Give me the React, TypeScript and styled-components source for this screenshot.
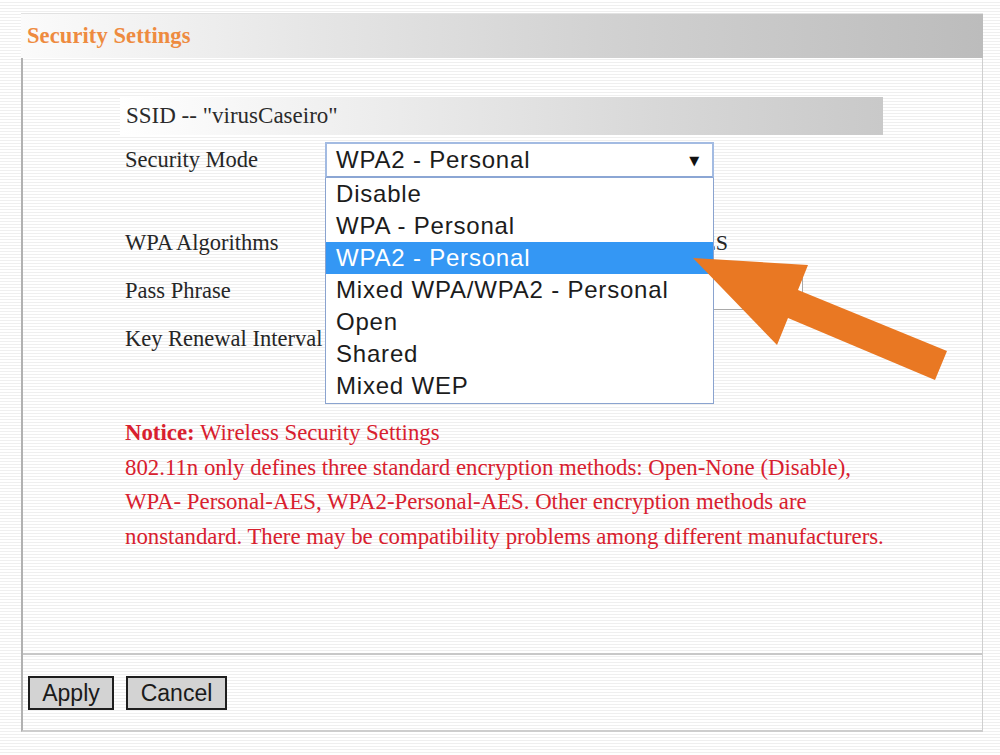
import React from "react";
import styled, { createGlobalStyle } from "styled-components";

const Global = createGlobalStyle`
  html, body { margin: 0; padding: 0; }
  body {
    width: 1000px;
    height: 755px;
    overflow: hidden;
    background: repeating-linear-gradient(to bottom, #ffffff 0px, #ffffff 2px, #efefef 2px, #efefef 3px);
    font-family: "Liberation Serif", "Times New Roman", serif;
  }
`;

const Page = styled.div`
  position: relative;
  width: 1000px;
  height: 755px;
  box-sizing: border-box;
  padding: 13px 0 0 21px;
`;

const Frame = styled.div`
  width: 962px;
  display: flex;
  flex-direction: column;
`;

const Header = styled.div`
  height: 45px;
  box-sizing: border-box;
  border-top: 1px solid #e2e2e2;
  padding-left: 6px;
  display: flex;
  align-items: center;
  background: linear-gradient(to right, #fbfbfb 0%, #e6e6e6 30%, #d2d2d2 60%, #bcbcbc 100%);
`;

const Title = styled.h1`
  margin: 0;
  font-family: "Liberation Serif", "Times New Roman", serif;
  font-size: 22.5px;
  font-weight: bold;
  color: #ee8b3f;
  letter-spacing: 0.1px;
`;

const Panel = styled.div`
  border-left: 2px solid #b1b1b1;
  border-right: 1px solid #cfcfcf;
  border-bottom: 2px solid #cdcdcd;
  display: flex;
  flex-direction: column;
`;

const Main = styled.div`
  height: 595px;
  box-sizing: border-box;
  padding: 39px 0 0 97px;
  display: flex;
  flex-direction: column;
`;

const SsidBar = styled.div`
  width: 763px;
  height: 38px;
  box-sizing: border-box;
  padding-left: 6px;
  display: flex;
  align-items: center;
  font-size: 23px;
  color: #2b2b2b;
  background: linear-gradient(to right, #ffffff 0%, #ececec 35%, #d8d8d8 70%, #c9c9c9 100%);
`;

const Row = styled.div<{ $h: number; $mt?: number }>`
  display: grid;
  grid-template-columns: 205px 1fr;
  align-items: center;
  height: ${(p) => p.$h}px;
  margin-top: ${(p) => p.$mt ?? 0}px;
  width: 763px;
`;

const Label = styled.div`
  padding-left: 5px;
  font-size: 22.5px;
  color: #262626;
  white-space: nowrap;
`;

const SelectWrap = styled.div`
  position: relative;
  width: 389px;
  height: 36px;
  z-index: 5;
`;

const SelectBox = styled.div`
  height: 36px;
  box-sizing: border-box;
  border: 2px solid #a3bbe2;
  border-bottom-color: #8ba6d4;
  background: #fff;
  display: flex;
  align-items: center;
  justify-content: space-between;
  padding: 0 12px 0 9px;
  font-family: "Liberation Sans", Arial, sans-serif;
  font-size: 24px;
  letter-spacing: 0.8px;
  color: #1c1c1c;
`;

const Caret = styled.span`
  font-size: 13px;
  color: #111;
  font-family: "DejaVu Sans", sans-serif;
`;

const OptionList = styled.ul`
  position: absolute;
  top: 36px;
  left: 0;
  width: 389px;
  box-sizing: border-box;
  margin: 0;
  padding: 0 0 1px;
  list-style: none;
  background: #fff;
  border: 1px solid #8aa3cf;
  border-top: none;
`;

const Option = styled.li<{ $active?: boolean }>`
  height: 32px;
  display: flex;
  align-items: center;
  padding-left: 10px;
  font-family: "Liberation Sans", Arial, sans-serif;
  font-size: 24px;
  letter-spacing: 0.8px;
  color: ${(p) => (p.$active ? "#ffffff" : "#1c1c1c")};
  background: ${(p) => (p.$active ? "#3497f4" : "transparent")};
`;

const RadioGroup = styled.div`
  width: 403px;
  display: flex;
  justify-content: flex-end;
  align-items: center;
  gap: 6px;
  font-size: 22px;
  color: #262626;
`;

const TextInput = styled.div<{ $w: number }>`
  width: ${(p) => p.$w}px;
  height: 37px;
  box-sizing: border-box;
  border: 1px solid #a9a9a9;
  border-top-color: #8d8d8d;
  background: #fff;
`;

const Notice = styled.div`
  margin-top: 53px;
  padding-left: 5px;
  font-size: 22.8px;
  line-height: 34.5px;
  color: #d8202e;
  white-space: nowrap;
`;

const Strong = styled.b`
  font-weight: bold;
`;

const Divider = styled.div`
  border-top: 2px solid #c8c8c8;
`;

const ButtonBar = styled.div`
  height: 75px;
  box-sizing: border-box;
  padding: 21px 0 0 5px;
  display: flex;
  gap: 12px;
  align-items: flex-start;
`;

const Button = styled.button<{ $w: number }>`
  width: ${(p) => p.$w}px;
  height: 34px;
  box-sizing: border-box;
  border: 2px solid #1e1e1e;
  background: #d3d3d3;
  font-family: "Liberation Sans", Arial, sans-serif;
  font-size: 23px;
  color: #1a1a1a;
  padding: 0;
`;

const ArrowLayer = styled.svg`
  position: absolute;
  left: 0;
  top: 0;
  width: 1000px;
  height: 755px;
  pointer-events: none;
  z-index: 10;
`;

const options = [
  "Disable",
  "WPA - Personal",
  "WPA2 - Personal",
  "Mixed WPA/WPA2 - Personal",
  "Open",
  "Shared",
  "Mixed WEP",
];

export default function App() {
  return (
    <>
      <Global />
      <Page>
        <Frame>
          <Header>
            <Title>Security Settings</Title>
          </Header>
          <Panel>
            <Main>
              <SsidBar>SSID -- "virusCaseiro"</SsidBar>
              <Row $h={36} $mt={7}>
                <Label>Security Mode</Label>
                <SelectWrap>
                  <SelectBox>
                    <span>WPA2 - Personal</span>
                    <Caret>▼</Caret>
                  </SelectBox>
                  <OptionList>
                    {options.map((o) => (
                      <Option key={o} $active={o === "WPA2 - Personal"}>
                        {o}
                      </Option>
                    ))}
                  </OptionList>
                </SelectWrap>
              </Row>
              <Row $h={48} $mt={41}>
                <Label>WPA Algorithms</Label>
                <RadioGroup>
                  <input type="radio" name="alg" />
                  <span>TKIP</span>
                  <input type="radio" name="alg" defaultChecked />
                  <span>AES</span>
                </RadioGroup>
              </Row>
              <Row $h={48}>
                <Label>Pass Phrase</Label>
                <TextInput $w={478} />
              </Row>
              <Row $h={48}>
                <Label>Key Renewal Interval</Label>
                <TextInput $w={200} />
              </Row>
              <Notice>
                <Strong>Notice:</Strong> Wireless Security Settings
                <br />
                802.11n only defines three standard encryption methods: Open-None (Disable),
                <br />
                WPA- Personal-AES, WPA2-Personal-AES. Other encryption methods are
                <br />
                nonstandard. There may be compatibility problems among different manufacturers.
              </Notice>
            </Main>
            <Divider />
            <ButtonBar>
              <Button $w={86}>Apply</Button>
              <Button $w={101}>Cancel</Button>
            </ButtonBar>
          </Panel>
        </Frame>
        <ArrowLayer viewBox="0 0 1000 755">
          <polygon
            points="693,258 808,265 798,290 947,351 935,380 788,318 777,345"
            fill="#e97823"
          />
        </ArrowLayer>
      </Page>
    </>
  );
}
